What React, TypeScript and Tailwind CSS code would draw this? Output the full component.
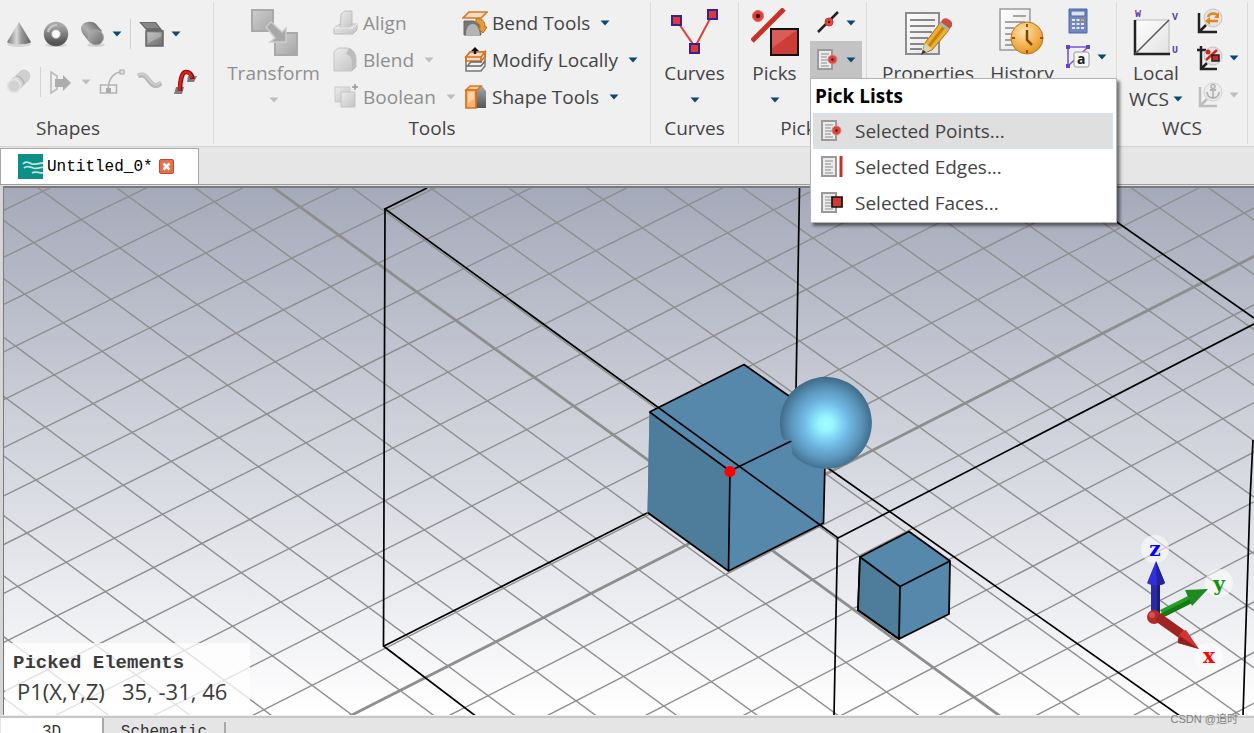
import type { ReactNode } from 'react';

const FONT = "font-['Open_Sans','Noto_Sans',sans-serif]";
const MONO = "font-['Liberation_Mono',monospace]";

/* ---------- small building blocks ---------- */

function Caret({ muted = false }: { muted?: boolean }) {
  return (
    <svg width="10" height="6" viewBox="0 0 10 6" className="shrink-0">
      <path d="M0.5 0.5h9L5 5.5z" fill={muted ? '#bdbdbd' : '#0b4a6f'} />
    </svg>
  );
}

function Divider() {
  return <span className="h-[30px] w-px shrink-0 bg-[#d2d2d2]" />;
}

interface GroupProps {
  label?: string;
  className: string;
  labelClass?: string;
  children: ReactNode;
}

function Group({ label, className, labelClass = '', children }: GroupProps) {
  return (
    <section className={`flex shrink-0 flex-col ${className}`}>
      <div className="flex h-[114px] items-start">{children}</div>
      {label && <h2 className={`text-center leading-7 ${labelClass}`}>{label}</h2>}
    </section>
  );
}

function GroupSeparator() {
  return <div className="mt-0.5 h-[142px] w-px shrink-0 bg-[#dadada]" />;
}

interface BigButtonProps {
  icon: ReactNode;
  label: string;
  muted?: boolean;
  caret?: boolean;
  className?: string;
}

function BigButton({ icon, label, muted = false, caret = true, className = '' }: BigButtonProps) {
  return (
    <button className={`flex shrink-0 flex-col items-center pt-2 ${muted ? 'text-[#8f8f8f]' : ''} ${className}`}>
      {icon}
      <span className="mt-[3px] leading-7">{label}</span>
      {caret && <span className="mt-2.5"><Caret muted={muted} /></span>}
    </button>
  );
}

interface RowButtonProps {
  icon: ReactNode;
  label: string;
  muted?: boolean;
  caret?: boolean;
}

function RowButton({ icon, label, muted = false, caret = true }: RowButtonProps) {
  return (
    <button className={`flex h-9 items-center whitespace-nowrap ${muted ? 'text-[#8f8f8f]' : ''}`}>
      {icon}
      <span className="mr-2.5 ml-1 leading-7">{label}</span>
      {caret && <Caret muted={muted} />}
    </button>
  );
}

interface IconButtonProps {
  label: string;
  icon: ReactNode;
  caret?: 'on' | 'muted';
}

function IconButton({ label, icon, caret }: IconButtonProps) {
  return (
    <button aria-label={label} className="flex items-center gap-1.5">
      {icon}
      {caret && <Caret muted={caret === 'muted'} />}
    </button>
  );
}

function Svg({ size = 26, children }: { size?: number; children: ReactNode }) {
  return (
    <svg width={size} height={size} viewBox={`0 0 ${size} ${size}`} fill="none" className="shrink-0">
      {children}
    </svg>
  );
}

/* ---------- icons ---------- */

function Gradients() {
  return (
    <svg width="0" height="0" className="absolute">
      <defs>
        <linearGradient id="metal" x1="0" x2="1" y1="0" y2="0">
          <stop offset="0" stopColor="#777" />
          <stop offset=".4" stopColor="#d8d8d8" />
          <stop offset=".6" stopColor="#9a9a9a" />
          <stop offset="1" stopColor="#606060" />
        </linearGradient>
        <linearGradient id="metalDiag" x1="0" x2="1" y1="0" y2="1">
          <stop offset="0" stopColor="#b4b4b4" />
          <stop offset="1" stopColor="#6a6a6a" />
        </linearGradient>
        <linearGradient id="metalDown" x1="0" x2="0" y1="0" y2="1">
          <stop offset="0" stopColor="#a8a8a8" />
          <stop offset="1" stopColor="#555" />
        </linearGradient>
        <linearGradient id="barrel" x1="0" x2="1" y1="1" y2="0">
          <stop offset="0" stopColor="#5c5c5c" />
          <stop offset=".45" stopColor="#b0b0b0" />
          <stop offset="1" stopColor="#555" />
        </linearGradient>
        <linearGradient id="paleDiag" x1="0" x2="1" y1="0" y2="1">
          <stop offset="0" stopColor="#ececec" />
          <stop offset="1" stopColor="#c2c2c2" />
        </linearGradient>
        <linearGradient id="grayDiag" x1="0" x2="1" y1="0" y2="1">
          <stop offset="0" stopColor="#cfcfcf" />
          <stop offset="1" stopColor="#a6a6a6" />
        </linearGradient>
        <linearGradient id="paper" x1="0" x2="1" y1="0" y2="1">
          <stop offset="0" stopColor="#fff" />
          <stop offset="1" stopColor="#e2e2e2" />
        </linearGradient>
        <radialGradient id="clock" cx=".4" cy=".3" r=".8">
          <stop offset="0" stopColor="#fde3b0" />
          <stop offset=".6" stopColor="#f3ae48" />
          <stop offset="1" stopColor="#d98a1e" />
        </radialGradient>
      </defs>
    </svg>
  );
}

function ConeIcon() {
  return (
    <Svg>
      <ellipse cx="13" cy="23" rx="12" ry="3" fill="#d5d5d5" />
      <path d="M13 1L1 21c2 3 22 3 24 0z" fill="url(#metal)" />
    </Svg>
  );
}

function TorusIcon() {
  return (
    <Svg>
      <ellipse cx="13" cy="24" rx="11" ry="2" fill="#d5d5d5" />
      <circle cx="13" cy="13" r="8.5" stroke="url(#metalDown)" strokeWidth="7.5" />
      <path d="M5 11a9 9 0 0 1 9-7" stroke="#c9c9c9" strokeWidth="2" />
      <circle cx="13" cy="13" r="4.500" fill="#fafafa" stroke="#999" />
    </Svg>
  );
}

function CylinderIcon() {
  return (
    <Svg>
      <ellipse cx="16" cy="24" rx="9" ry="2" fill="#d5d5d5" />
      <path d="M3 3c4-3 10-3 13 0l6 7-12 12-7-9C1 10 0 6 3 3z" fill="url(#barrel)" />
      <circle cx="16" cy="16.500" r="7.500" fill="url(#metalDiag)" stroke="#a8a8a8" />
    </Svg>
  );
}

function ExtrudeBoxIcon() {
  return (
    <Svg>
      <path d="M0 1h17l7 9H8z" fill="#6c6c6c" />
      <path d="M3 2h13l4 5H7z" fill="#878787" />
      <path d="M7 10h17v15H7z" fill="url(#metalDiag)" stroke="#666" strokeWidth="1.5" />
      <path d="M9 12h13v4L9 22z" fill="#fff" opacity=".25" />
    </Svg>
  );
}

function LoftIcon() {
  return (
    <Svg>
      <path d="M2 14L15 2c5-3 11 3 8 8L12 22c-5 4-13-1-10-8z" fill="url(#paleDiag)" stroke="#c4c4c4" />
      <circle cx="18" cy="8" r="6" fill="#cfcfcf" />
      <circle cx="8" cy="17" r="6.500" fill="#d2d2d2" stroke="#e6e6e6" strokeWidth="1.500" />
      <path d="M10 7c4 0 8 4 8 8" stroke="#b5b5b5" strokeWidth="1.500" />
    </Svg>
  );
}

function ExtrudeArrowIcon() {
  return (
    <Svg>
      <path d="M2 3l6 4v13l-6 4z" stroke="#bcbcbc" strokeWidth="1.6" />
      <path d="M6 10h8V6l8 8-8 8v-4H6z" fill="#adadad" />
    </Svg>
  );
}

function SweepIcon() {
  return (
    <Svg>
      <path d="M1.500 16h16v8h-16zM9.500 21c-1-9 4-17 12-18" stroke="#b4b4b4" strokeWidth="1.6" />
      <path d="M7 19h5v5H7z" fill="#aaa" />
      <path d="M21 1h4v4h-4z" fill="#e5e5e5" stroke="#aaa" strokeWidth="1.200" />
    </Svg>
  );
}

function WaveIcon() {
  return (
    <Svg>
      <path d="M2 7c7-3 9 2 12 6s7 5 11 1" stroke="#b9b9b9" strokeWidth="5" />
      <path d="M2 6c7-3 9 2 12 6s7 5 11 1" stroke="#cecece" strokeWidth="2" />
    </Svg>
  );
}

function BendWireIcon() {
  return (
    <Svg>
      <path d="M3 18h8l-2 7H1zM15 7h9l-3 6h-7z" fill="#7d7d7d" />
      <path d="M7 22C7 12 9 3 13 3c4 0 6 3 6.500 7" stroke="#8c0d0d" strokeWidth="4.500" />
      <path d="M6.500 22C6.500 12 9 3 13 3c2.500 0 5 2 5.500 6" stroke="#dd2020" strokeWidth="2.500" />
    </Svg>
  );
}

function TransformIcon() {
  return (
    <Svg size={48}>
      <path d="M25 25h22v22H25z" fill="url(#grayDiag)" stroke="#a9a9a9" strokeWidth="2" />
      <path d="M2 2h21v21H2z" fill="url(#grayDiag)" stroke="#a9a9a9" strokeWidth="2" />
      <path d="M16 19l5-5 11 10 4-4v14H20l5-4z" fill="#a8a8a8" stroke="#ccc" strokeWidth="1.500" />
    </Svg>
  );
}

function AlignIcon() {
  return (
    <Svg>
      <path d="M1 18l6-4h17v6l-4 4H1z" fill="url(#paleDiag)" stroke="#bcbcbc" />
      <path d="M8 4l4-3h7v13l-3 4H7z" fill="url(#paleDiag)" stroke="#c0c0c0" />
      <path d="M1 18h18l5-4" stroke="#f4f4f4" />
    </Svg>
  );
}

function BlendIcon() {
  return (
    <Svg>
      <path d="M1 5l4-4h9c6 1 9 6 9 11v8l-4 4H1z" fill="url(#paleDiag)" stroke="#c4c4c4" />
      <path d="M13 7c4 1 6 4 6 9v8l4-4v-8c0-5-3-10-7-11z" fill="#bdbdbd" />
    </Svg>
  );
}

function BooleanIcon() {
  return (
    <Svg>
      <path d="M2 3h15v15H2z" fill="url(#paleDiag)" stroke="#cacaca" />
      <path d="M8 8h14v15H8z" fill="url(#paleDiag)" stroke="#c2c2c2" />
      <path d="M22 0v6M19 3h6" stroke="#999" strokeWidth="1.500" />
    </Svg>
  );
}

function BendToolsIcon() {
  return (
    <Svg>
      <path d="M7 2h18l-6 6H1z" fill="#f3dcc2" stroke="#d97a22" strokeWidth="1.700" />
      <path d="M2 11h9c5 1 8 5 8 14H2z" fill="#777" stroke="#666" />
      <path d="M4 25c0-8 3-11 7-11s6 4 7 11z" fill="#b4b4b4" />
      <path d="M14 9c6-1 9 2 9 8h2l-4 6-5-5h2c0-4-1-5-4-5z" fill="#e79a3a" stroke="#bf6a14" />
    </Svg>
  );
}

function ModifyIcon() {
  return (
    <Svg>
      <path d="M4 10l4-5h15v14l-4 5H4z" fill="#f2f2f2" stroke="#777" strokeWidth="1.500" />
      <path d="M4 10l4-5h15l-4 5zM4 10h15v4H4zM19 10l4-5v5l-4 4z" fill="#f6dcc4" stroke="#d8701c" strokeWidth="1.700" />
      <path d="M4 19h15l4-5M6 18l3-3h11" stroke="#666" strokeWidth="1.500" />
      <path d="M13 7V3" stroke="#111" strokeWidth="2.500" />
      <path d="M9 4l4-4 4 4z" fill="#111" />
    </Svg>
  );
}

function ShapeToolsIcon() {
  return (
    <Svg>
      <path d="M12 6l3-4h5l4 5v17H12z" fill="url(#metalDown)" />
      <path d="M4 6l4-4h11l-4 4z" fill="#f3c79a" stroke="#d97a22" strokeWidth="1.500" />
      <path d="M4 6h10v18H4z" fill="#f5b56e" stroke="#d8701c" strokeWidth="1.700" />
      <path d="M6 8h6v7l-6 4z" fill="#fff" opacity=".4" />
    </Svg>
  );
}

function CurvesIcon() {
  return (
    <Svg size={48}>
      <path d="M6 13l18 26L41 7" stroke="#d9433a" strokeWidth="2" />
      <path d="M1 8h9v9H1zM37 2h9v9h-9zM19 36h9v9h-9z" fill="#d93a3a" stroke="#3a1f96" strokeWidth="2" />
    </Svg>
  );
}

function PicksIcon() {
  return (
    <Svg size={48}>
      <circle cx="7" cy="8" r="5.500" fill="#dc3f38" stroke="#e36a63" />
      <circle cx="7" cy="8" r="2" fill="#300" />
      <path d="M1 33L33 1" stroke="#c9302a" strokeWidth="5" />
      <path d="M20 21h27v26H20z" fill="#cc3d37" stroke="#111" strokeWidth="2" />
      <path d="M21 22h25L21 40z" fill="#d95d57" />
    </Svg>
  );
}

function PickPointIcon() {
  return (
    <Svg size={24}>
      <path d="M2 21L22 1" stroke="#222" strokeWidth="2.500" />
      <circle cx="13" cy="11" r="4" fill="#dd4a42" stroke="#c4302a" />
      <circle cx="13" cy="11" r="1.200" fill="#400" />
    </Svg>
  );
}

function ListSheet() {
  return (
    <>
      <path d="M2 2h14v19H2z" fill="#ececec" stroke="#9a9a9a" strokeWidth="2" />
      <path d="M5 6h8M5 9h6M5 12h8M5 15h6M5 18h8" stroke="#8c8c8c" />
    </>
  );
}

function ListPointIcon() {
  return (
    <Svg size={24}>
      <ListSheet />
      <circle cx="16.500" cy="11.500" r="4.500" fill="#dc4840" stroke="#d98a84" />
      <circle cx="16.500" cy="11.500" r="1.200" fill="#5a0000" />
    </Svg>
  );
}

function ListEdgeIcon() {
  return (
    <Svg size={24}>
      <ListSheet />
      <path d="M21 1v21" stroke="#c62f28" strokeWidth="3" />
    </Svg>
  );
}

function ListFaceIcon() {
  return (
    <Svg size={24}>
      <ListSheet />
      <path d="M12 6h10v10H12z" fill="#d03a34" stroke="#111" strokeWidth="1.700" />
    </Svg>
  );
}

function PropertiesIcon() {
  return (
    <Svg size={48}>
      <path d="M2 5h33v41H2z" fill="url(#paper)" stroke="#8c8c8c" strokeWidth="2" />
      <path d="M6 12h25M6 18h25M6 24h22M6 30h18M6 36h14M6 41h12" stroke="#666" strokeWidth="1.500" />
      <path d="M36 15l9 7-17 20-10 4 3-11z" fill="#eeb033" stroke="#9c7420" />
      <path d="M40 19L25 38" stroke="#c48414" strokeWidth="3" />
      <path d="M36 15l3-4c4-3 11 3 9 7l-3 4z" fill="#c9503c" />
      <path d="M35 16l2-2 9 7-2 2z" fill="#b0b0b0" />
      <path d="M21 35l7 6-10 5z" fill="#d9d3b8" />
      <path d="M19 42l3 2-5 3z" fill="#333" />
    </Svg>
  );
}

function HistoryIcon() {
  return (
    <Svg size={48}>
      <path d="M2 1h30v41H2z" fill="url(#paper)" stroke="#9a9a9a" strokeWidth="1.500" />
      <path d="M15 8h13M7 14h20M7 20h9M7 26h7M7 32h7M7 37h9" stroke="#8a8a8a" strokeWidth="1.500" />
      <circle cx="29" cy="30" r="16" fill="url(#clock)" stroke="#b9771b" />
      <path d="M29 22v10l5 5" stroke="#7a4708" strokeWidth="2.500" />
      <path d="M29 16v3M29 42v3M14 30h3M42 30h3" stroke="#8a5a14" strokeWidth="2" />
    </Svg>
  );
}

function CalculatorIcon() {
  return (
    <Svg>
      <path d="M4 1h18v24H4z" fill="#7488bf" stroke="#4d64a4" />
      <path d="M6 3h14v5H6z" fill="#dfe5ee" stroke="#4d64a4" />
      <path d="M7 12h12M7 16h12M7 20h12" stroke="#e4e9f7" strokeWidth="2" strokeDasharray="3 1.500" />
      <path d="M16 11h3v2h-3z" fill="#f0a030" />
    </Svg>
  );
}

function ParameterIcon() {
  return (
    <Svg>
      <path d="M3 3h20L3 22z" stroke="#7b55d0" strokeWidth="1.600" />
      <path d="M1 1h4v4H1zM21 1h4v4h-4zM1 20h4v4H1z" fill="#6a3fd0" />
      <rect x="9" y="8" width="15" height="15" rx="2" fill="#f6f6f6" stroke="#999" />
      <text x="12" y="20" fontSize="14" fontWeight="700" fill="#222" fontFamily="Open Sans">a</text>
    </Svg>
  );
}

function LocalWcsIcon() {
  return (
    <Svg size={48}>
      <path d="M3 12h34v34H3z" fill="url(#paper)" stroke="#bbb" />
      <path d="M3 12v34h35" stroke="#222" strokeWidth="2.500" />
      <path d="M3 46l34-34" stroke="#555" strokeWidth="1.500" />
      <g fontSize="10" fontWeight="700" fill="#5f3dac" fontFamily="Liberation Mono">
        <text x="3" y="9">W</text>
        <text x="40" y="12">V</text>
        <text x="40" y="45">U</text>
      </g>
    </Svg>
  );
}

function AxisRotateIcon() {
  return (
    <Svg>
      <path d="M2 5v19h18M2 24l7-7" stroke="#222" strokeWidth="2.500" />
      <circle cx="16" cy="10" r="9" fill="#e4e4e4" stroke="#c4c4c4" />
      <path d="M11 9c1-4 8-5 10-1M21 13H12" stroke="#e38421" strokeWidth="2.500" />
      <path d="M22 4v6h-5zM13 9v8l-5-4z" fill="#e38421" />
    </Svg>
  );
}

function AxisPickIcon() {
  return (
    <Svg>
      <path d="M4 1v23h16M4 24l6-6M0 5h9" stroke="#222" strokeWidth="2.500" />
      <circle cx="16" cy="11" r="9" fill="#e2e2e2" stroke="#c4c4c4" />
      <circle cx="11" cy="7" r="2.500" fill="#cc2a24" />
      <path d="M9 15L20 5" stroke="#cc2a24" strokeWidth="2.500" />
      <path d="M15 10h7v6h-7z" fill="#cc2a24" stroke="#222" strokeWidth="1.500" />
    </Svg>
  );
}

function AxisAnchorIcon() {
  return (
    <Svg>
      <path d="M3 5v19h17M3 24l7-7" stroke="#bdbdbd" strokeWidth="2.500" />
      <circle cx="16" cy="10" r="9" fill="#ececec" stroke="#d0d0d0" />
      <circle cx="16" cy="4.500" r="2" stroke="#b4b4b4" strokeWidth="1.500" />
      <path d="M16 6v10M10 10c0 4 3 6 6 6s6-2 6-6M13 8h6" stroke="#b4b4b4" strokeWidth="1.800" />
    </Svg>
  );
}

/* ---------- ribbon ---------- */

const PICK_LIST_ITEMS = [
  { label: 'Selected Points...', icon: <ListPointIcon />, active: true },
  { label: 'Selected Edges...', icon: <ListEdgeIcon />, active: false },
  { label: 'Selected Faces...', icon: <ListFaceIcon />, active: false },
];

function PickListMenu() {
  return (
    <div className="absolute top-full left-0 z-10 w-[307px] border border-[#b4b4b4] bg-white p-0.5 pb-px shadow-[3px_3px_3px_rgba(0,0,0,0.5)]">
      <h3 className="h-8 pl-0.5 text-[19px] leading-[30px] font-bold text-black">Pick Lists</h3>
      {PICK_LIST_ITEMS.map(item => (
        <button
          key={item.label}
          className={`flex h-9 w-[300px] items-center border pl-1.5 text-left ${
            item.active ? 'border-[#cfe6f2] bg-[#dfdfdf]' : 'border-transparent'
          }`}
        >
          {item.icon}
          <span className="ml-[11px]">{item.label}</span>
        </button>
      ))}
    </div>
  );
}

function Ribbon() {
  return (
    <header className="flex h-[147px] shrink-0 border-b border-[#d4d4d4] bg-[#f0f0f0]">
      <Group label="Shapes" className="w-[213px]" labelClass="w-[136px]">
        <div className="flex flex-col gap-[18px] pt-[19px] pl-[6px]">
          <div className="flex h-[30px] items-center">
            <div className="flex gap-[11px]">
              <IconButton label="Cone" icon={<ConeIcon />} />
              <IconButton label="Torus" icon={<TorusIcon />} />
              <IconButton label="Cylinder" icon={<CylinderIcon />} caret="on" />
            </div>
            <div className="flex items-center gap-2 pl-2">
              <Divider />
              <IconButton label="Extrude face" icon={<ExtrudeBoxIcon />} caret="on" />
            </div>
          </div>
          <div className="flex h-[30px] items-center">
            <IconButton label="Loft" icon={<LoftIcon />} />
            <div className="flex items-center gap-2 pr-2 pl-2">
              <Divider />
              <IconButton label="Extrude" icon={<ExtrudeArrowIcon />} caret="muted" />
            </div>
            <div className="flex gap-[11px]">
              <IconButton label="Sweep" icon={<SweepIcon />} />
              <IconButton label="Cover" icon={<WaveIcon />} />
              <IconButton label="Bond wire" icon={<BendWireIcon />} />
            </div>
          </div>
        </div>
      </Group>
      <GroupSeparator />
      <Group label="Tools" className="w-[436px]">
        <BigButton icon={<TransformIcon />} label="Transform" muted className="w-[119px]" />
        <div className="flex w-[129px] flex-col gap-px pt-[5px]">
          <RowButton icon={<AlignIcon />} label="Align" muted caret={false} />
          <RowButton icon={<BlendIcon />} label="Blend" muted />
          <RowButton icon={<BooleanIcon />} label="Boolean" muted />
        </div>
        <div className="flex flex-col gap-px pt-[5px]">
          <RowButton icon={<BendToolsIcon />} label="Bend Tools" />
          <RowButton icon={<ModifyIcon />} label="Modify Locally" />
          <RowButton icon={<ShapeToolsIcon />} label="Shape Tools" />
        </div>
      </Group>
      <GroupSeparator />
      <Group label="Curves" className="w-[87px]">
        <BigButton icon={<CurvesIcon />} label="Curves" className="w-full" />
      </Group>
      <GroupSeparator />
      <Group label="Picks" className="w-[127px]">
        <BigButton icon={<PicksIcon />} label="Picks" className="w-[71px]" />
        <div className="flex w-[52px] flex-col pt-1">
          <button aria-label="Pick point" className="flex h-[37px] items-center gap-1.5 pl-1.5">
            <PickPointIcon />
            <Caret />
          </button>
          <div className="relative">
            <button aria-label="Pick lists" aria-expanded="true" className="flex h-[37px] w-full items-center gap-1.5 bg-[#c3c3c3] pl-1.5">
              <ListPointIcon />
              <Caret />
            </button>
            <PickListMenu />
          </div>
        </div>
      </Group>
      <GroupSeparator />
      <Group className="w-[249px]">
        <BigButton icon={<PropertiesIcon />} label="Properties" caret={false} className="w-[122px]" />
        <BigButton icon={<HistoryIcon />} label="History" caret={false} className="w-[66px]" />
        <div className="flex flex-col gap-2.5 pt-2 pl-2.5">
          <IconButton label="Calculator" icon={<CalculatorIcon />} />
          <IconButton label="Parameters" icon={<ParameterIcon />} caret="on" />
        </div>
      </Group>
      <GroupSeparator />
      <Group label="WCS" className="w-[130px]">
        <button className="flex w-[78px] flex-col items-center pt-2">
          <LocalWcsIcon />
          <span className="mt-[3px] leading-7">Local</span>
          <span className="flex items-center gap-1 leading-6">
            WCS <Caret />
          </span>
        </button>
        <div className="flex flex-col gap-[11px] pt-2 pl-0.5">
          <IconButton label="Rotate WCS" icon={<AxisRotateIcon />} />
          <IconButton label="Align WCS with pick" icon={<AxisPickIcon />} caret="on" />
          <IconButton label="Fix WCS" icon={<AxisAnchorIcon />} caret="muted" />
        </div>
      </Group>
      <GroupSeparator />
    </header>
  );
}

/* ---------- document tabs ---------- */

function DocumentTabs() {
  return (
    <nav className="flex h-[38px] shrink-0 border-b border-[#9c9c9c] bg-[#e6e6e6]">
      <div className={`mt-px flex w-[199px] items-center border-x border-t border-[#a8a8a8] bg-white pl-[17px] text-base text-black ${MONO}`}>
        <svg width="25" height="25" viewBox="0 0 25 25" fill="none" className="shrink-0">
          <path d="M0 0h25v25H0z" fill="#0b8f87" />
          <path d="M5 10c3-4 6-1 9 0s6-1 11-1M6 14c3-3 6-1 9 0s6 0 10-1M14 19c3-2 6 0 11 0" stroke="#bfe4e0" strokeWidth="1.800" />
        </svg>
        <span className="ml-1">Untitled_0*</span>
        <button aria-label="Close" className="ml-1.5 flex size-[15px] items-center justify-center rounded-xs border border-[#c8452a] bg-[#e0704f]">
          <svg width="9" height="9" viewBox="0 0 9 9">
            <path d="M1.500 1.500l6 6M7.500 1.500l-6 6" stroke="#fff" strokeWidth="2.500" />
          </svg>
        </button>
      </div>
    </nav>
  );
}

/* ---------- 3D view ---------- */

// perspective of the working plane, origin at the crossing of the two main axes
function project(i: number, j: number) {
  const w = 1 - 0.00138 * i + 0.00171 * j;
  return {
    x: (38.9 * i + 48.165 * j + 732.5) / w,
    y: (28.31 * i - 22.96 * j + 521.5) / w,
  };
}

const RANGE = 34;
const GRID = Array.from({ length: RANGE * 2 + 1 }, (_, n) => n - RANGE);

function GridLines() {
  return (
    <g stroke="#8e8e8e">
      {GRID.map(n => {
        const a = project(n, -RANGE);
        const b = project(n, RANGE);
        const c = project(-RANGE, n);
        const d = project(RANGE, n);
        const width = n === 0 ? 2.8 : 1.4;
        return (
          <g key={n} strokeWidth={width}>
            <line x1={a.x} y1={a.y} x2={b.x} y2={b.y} />
            <line x1={c.x} y1={c.y} x2={d.x} y2={d.y} />
          </g>
        );
      })}
    </g>
  );
}

function AxisTriad() {
  return (
    <g>
      <g fill="#fff" opacity=".55">
        <circle cx="1155" cy="549" r="14" />
        <circle cx="1219" cy="583" r="14" />
        <circle cx="1209" cy="657" r="14" />
      </g>
      <path d="M1160 610l28-14 4 7-28 14z" fill="#23a023" />
      <path d="M1160 614l30-15 2 4-28 14z" fill="#157815" />
      <path d="M1185 590l23-1-16 17z" fill="#1f8a22" />
      <path d="M1151 583h9v31h-9z" fill="#2a2aa8" />
      <path d="M1157 583h3v31h-3z" fill="#1c1c7a" />
      <path d="M1156 561l-9 22c3 3 15 3 18 0z" fill="#3030d8" />
      <path d="M1156 561l9 22c-2 2-5 2-8 2z" fill="#22229c" />
      <circle cx="1154" cy="617" r="7" fill="#b52a2a" />
      <circle cx="1152" cy="615" r="3" fill="#d85050" />
      <path d="M1160 613l24 17-5 8-24-17z" fill="#a02424" />
      <path d="M1186 630l13 19-21-6c-1-6 2-12 8-13z" fill="#d03434" />
      <path d="M1178 643c0-3 1-5 2-7l19 13z" fill="#8e2020" />
      <g fontFamily="DejaVu Serif" fontWeight="700" fontSize="20" textAnchor="middle">
        <text x="1155" y="556" fill="#0000ff">z</text>
        <text x="1219" y="591" fill="#0a960a">y</text>
        <text x="1209" y="663" fill="#ff0000">x</text>
      </g>
    </g>
  );
}

function Scene() {
  return (
    <svg viewBox="4 188 1250 527" preserveAspectRatio="xMinYMin slice" className="block h-full w-full" fill="none">
      <defs>
        <linearGradient id="sky" x1="0" x2="0" y1="0" y2="1">
          <stop offset="0" stopColor="#a5aaba" />
          <stop offset=".5" stopColor="#d3d5de" />
          <stop offset="1" stopColor="#ffffff" />
        </linearGradient>
        <radialGradient id="ball" gradientUnits="userSpaceOnUse" cx="826" cy="424" r="47">
          <stop offset="0" stopColor="#a0ffff" />
          <stop offset=".15" stopColor="#97f6ff" />
          <stop offset=".45" stopColor="#74bdea" />
          <stop offset=".75" stopColor="#5a94bb" />
          <stop offset="1" stopColor="#3f6a86" />
        </radialGradient>
      </defs>
      <rect x="4" y="188" width="1250" height="527" fill="url(#sky)" />
      <GridLines />
      {/* back edges of the bounding box, hidden by the solids */}
      <g stroke="#000" strokeWidth="1.700">
        <path d="M799.500 188L796 390" />
        <path d="M384 646L647 513" />
        <path d="M1064 185L1254 318" />
        <path d="M825 466L1180 716" />
      </g>
      {/* large brick */}
      <g stroke="#000" strokeWidth="1.700" strokeLinejoin="round">
        <path d="M649.500 412L744 364.500L826 422L823.500 523L728.500 571L647.500 512.500z" fill="#5588ab" stroke="none" />
        <path d="M649.500 412L730 471L728.500 571L647.500 512.500z" fill="#4e7d9b" stroke="none" />
        <path d="M649.500 412L744 364.500L826 422L823.500 523L728.500 571L647.500 512.500" />
        <path d="M649.500 412L730 471L826 424M730 471L728.500 571" />
      </g>
      <path d="M791.500 441L792 454A46 46 0 1 0 782.900 439.300z" fill="url(#ball)" />
      {/* small brick */}
      <g stroke="#000" strokeWidth="1.800" strokeLinejoin="round">
        <path d="M860 557L909 531.500L950 561L949 614L899 639L858 610z" fill="#5588ab" />
        <path d="M860 557L900 586.500L899 639L858 610z" fill="#4e7d9b" />
        <path d="M900 586.500L950 561" />
      </g>
      {/* front edges of the bounding box */}
      <g stroke="#000" strokeWidth="1.700">
        <path d="M427 188L385 209L838 538L1256 323" />
        <path d="M385 209L383.500 646L477 717" />
        <path d="M837.500 538L834 716" />
        <path d="M1253 440L1250 500L1243 716" />
      </g>
      <circle cx="730" cy="471.500" r="5.500" fill="#ff0000" />
      <AxisTriad />
    </svg>
  );
}

function Viewport() {
  return (
    <main className="relative min-h-0 flex-1 border-t border-b border-l-[3px] border-t-[#e2e2e2] border-b-[#eef0ee] border-l-[#d6d6d6]">
      <div className="h-full border-t-2 border-l border-[#7a7a7a]">
        <Scene />
      </div>
      <div className="absolute bottom-0 left-0.5 h-[72px] w-[245px] bg-white/75 pt-1.5 text-[#3c3c3c]">
        <h3 className={`pl-2 text-[19px] leading-7 font-bold ${MONO}`}>Picked Elements</h3>
        <p className="pl-3 text-[22px] leading-7 whitespace-pre">P1(X,Y,Z)   35, -31, 46</p>
      </div>
    </main>
  );
}

function ViewTabs() {
  return (
    <nav className={`flex h-[17px] shrink-0 items-start overflow-hidden border-t-2 border-[#c6c8c6] bg-[#e5e5e5] pl-px text-base leading-6 text-[#333] ${MONO}`}>
      <button className="-mt-0.5 h-8 w-[103px] border-r-2 border-[#a9a9a9] bg-white">3D</button>
      <button className="-mt-0.5 h-8 w-[120px]">Schematic</button>
      <span className="mt-1 h-5 w-0.5 bg-[#a9a9a9]" />
    </nav>
  );
}

export default function App() {
  return (
    <div className={`relative flex h-screen flex-col overflow-hidden bg-[#f0f0f0] text-[19px] text-[#444] ${FONT}`}>
      <Gradients />
      <Ribbon />
      <DocumentTabs />
      <Viewport />
      <ViewTabs />
      <small className="absolute right-4 bottom-1 font-['Liberation_Sans','Noto_Sans_CJK_SC',sans-serif] text-[11px] leading-5 text-[#808080]">
        CSDN @追时
      </small>
    </div>
  );
}
